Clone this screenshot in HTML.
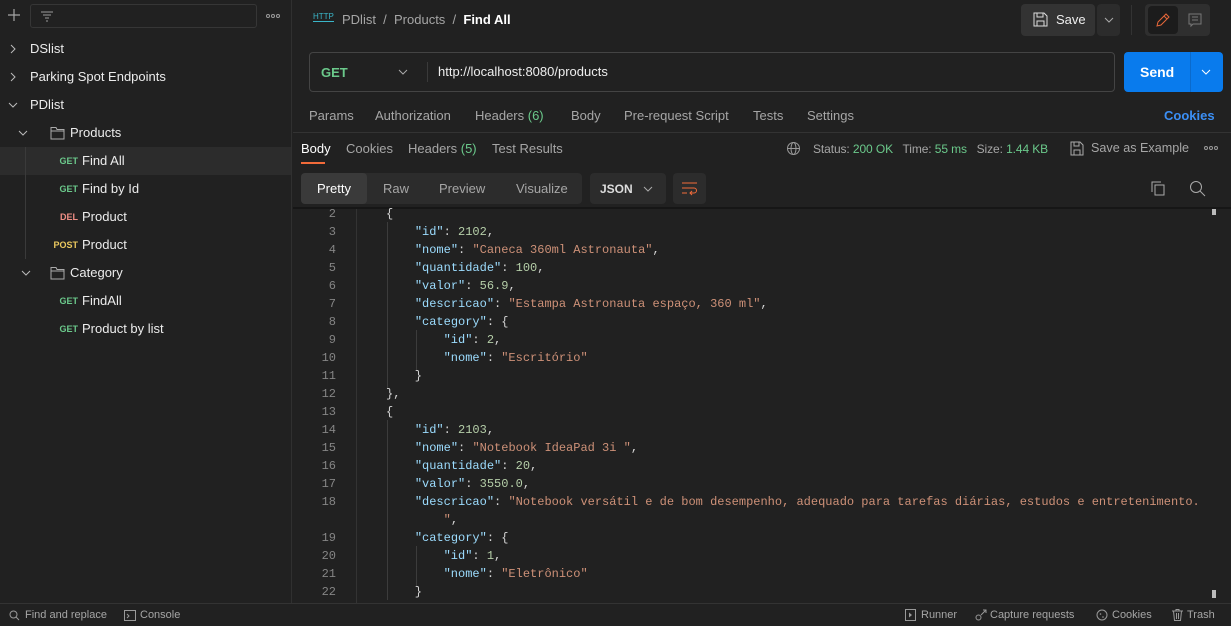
<!DOCTYPE html>
<html><head><meta charset="utf-8"><style>
*{margin:0;padding:0;box-sizing:border-box}
body{width:1231px;height:626px;background:#212121;font-family:"Liberation Sans",sans-serif;color:#e6e6e6;position:relative;overflow:hidden;font-size:13px}
.a{position:absolute;white-space:nowrap}
.side{position:absolute;left:0;top:0;width:292px;height:603px;background:#212121;border-right:1px solid #303030}
.row{position:absolute;left:0;width:291px;height:28px;line-height:28px;font-size:13px;color:#ececec}
.m{font-size:9px;font-weight:bold;display:inline-block;text-align:right}
.g{color:#6bc98b}.d{color:#f08e85}.p{color:#ecc95f}
.code{font-family:"Liberation Mono",monospace;font-size:12px;line-height:18px}
.k{color:#9cdcfe}.s{color:#ce9178}.n{color:#b5cea8}.w{color:#d4d4d4}
.ln{position:absolute;width:40px;text-align:right;left:296px;color:#858585;font-family:"Liberation Mono",monospace;font-size:12px}
.gray{color:#a6a6a6}
.dots{position:absolute;display:flex;gap:1px}
.dots i{display:block;width:4px;height:4px;border:1px solid #9a9a9a;border-radius:50%}
</style></head><body>
<div class="side">
  <svg class="a" style="left:8px;top:9px" width="12" height="12"><path d="M6 0v12M0 6h12" stroke="#a6a6a6" stroke-width="1.2"/></svg>
  <div class="a" style="left:30px;top:4px;width:227px;height:24px;border:1px solid #363636;border-radius:3px"></div>
  <svg class="a" style="left:40px;top:10px" width="14" height="12"><path d="M1 2h12M3 5h8M5 8h4M6 11h2" stroke="#9a9a9a" stroke-width="1"/></svg>
  <div class="dots" style="left:266px;top:14px"><i></i><i></i><i></i></div>
  <div class="row" style="top:35px"><svg class="a" style="left:10px;top:9px" width="6" height="10"><path d="M1 1l4 4-4 4" stroke="#bbb" fill="none"/></svg><span class="a" style="left:30px">DSlist</span></div>
  <div class="row" style="top:63px"><svg class="a" style="left:10px;top:9px" width="6" height="10"><path d="M1 1l4 4-4 4" stroke="#bbb" fill="none"/></svg><span class="a" style="left:30px">Parking Spot Endpoints</span></div>
  <div class="row" style="top:91px"><svg class="a" style="left:8px;top:11px" width="10" height="6"><path d="M1 1l4 4 4-4" stroke="#bbb" fill="none"/></svg><span class="a" style="left:30px">PDlist</span></div>
  <div class="row" style="top:119px"><svg class="a" style="left:18px;top:11px" width="10" height="6"><path d="M1 1l4 4 4-4" stroke="#bbb" fill="none"/></svg><svg class="a" style="left:50px;top:7px" width="15" height="14"><path d="M1 1.5h5l1 2h7v9.5H1zM1 5h13" stroke="#aaa" fill="none"/></svg><span class="a" style="left:70px">Products</span></div>
  <div class="row" style="top:147px;background:#2c2c2c"><span class="a m g" style="left:40px;width:38px">GET</span><span class="a" style="left:82px">Find All</span></div>
  <div class="row" style="top:175px"><span class="a m g" style="left:40px;width:38px">GET</span><span class="a" style="left:82px">Find by Id</span></div>
  <div class="row" style="top:203px"><span class="a m d" style="left:40px;width:38px">DEL</span><span class="a" style="left:82px">Product</span></div>
  <div class="row" style="top:231px"><span class="a m p" style="left:40px;width:38px">POST</span><span class="a" style="left:82px">Product</span></div>
  <div class="a" style="left:25px;top:147px;width:1px;height:112px;background:#3a3a3a"></div>
  <div class="row" style="top:259px"><svg class="a" style="left:21px;top:11px" width="10" height="6"><path d="M1 1l4 4 4-4" stroke="#bbb" fill="none"/></svg><svg class="a" style="left:50px;top:7px" width="15" height="14"><path d="M1 1.5h5l1 2h7v9.5H1zM1 5h13" stroke="#aaa" fill="none"/></svg><span class="a" style="left:70px">Category</span></div>
  <div class="row" style="top:287px"><span class="a m g" style="left:40px;width:38px">GET</span><span class="a" style="left:82px">FindAll</span></div>
  <div class="row" style="top:315px"><span class="a m g" style="left:40px;width:38px">GET</span><span class="a" style="left:82px">Product by list</span></div>
</div>

<!-- header -->
<div class="a" style="left:313px;top:12px;font-size:8px;color:#3ab6c9;border-bottom:1px solid #3ab6c9">HTTP</div>
<div class="a" style="left:342px;top:12px;font-size:13px;color:#a6a6a6">PDlist &nbsp;/&nbsp; Products &nbsp;/&nbsp; <b style="color:#fff">Find All</b></div>
<div class="a" style="left:1021px;top:4px;width:74px;height:32px;background:#333;border-radius:4px"></div>
<svg class="a" style="left:1033px;top:12px" width="15" height="15"><path d="M1 1h10l3 3v10H1zM4 1v4h6V1M4 14V9h7v5" stroke="#ddd" fill="none"/></svg>
<div class="a" style="left:1056px;top:12px;font-size:13px;color:#eee">Save</div>
<div class="a" style="left:1097px;top:4px;width:23px;height:32px;background:#2c2c2c;border-radius:4px"></div>
<svg class="a" style="left:1104px;top:17px" width="10" height="6"><path d="M1 1l4 4 4-4" stroke="#aaa" fill="none"/></svg>
<div class="a" style="left:1131px;top:5px;width:1px;height:30px;background:#333"></div>
<div class="a" style="left:1145px;top:4px;width:65px;height:32px;background:#2f2f2f;border-radius:4px"></div>
<div class="a" style="left:1148px;top:6px;width:30px;height:28px;background:#1c1c1c;border-radius:4px"></div>
<svg class="a" style="left:1155px;top:12px" width="16" height="16"><path d="M2 14l1-4 8-8 3 3-8 8zM9 4l3 3" stroke="#e8683a" fill="none"/></svg>
<svg class="a" style="left:1187px;top:12px" width="16" height="16"><path d="M2 2h12v10H6l-2 2v-2H2zM5 5h6M5 8h6" stroke="#777" fill="none"/></svg>

<!-- URL bar -->
<div class="a" style="left:309px;top:52px;width:806px;height:40px;border:1px solid #444;border-radius:4px"></div>
<div class="a" style="left:321px;top:65px;font-size:13px;font-weight:bold;color:#6bc98b">GET</div>
<svg class="a" style="left:398px;top:69px" width="10" height="6"><path d="M1 1l4 4 4-4" stroke="#aaa" fill="none"/></svg>
<div class="a" style="left:427px;top:62px;width:1px;height:20px;background:#3a3a3a"></div>
<div class="a" style="left:438px;top:64px;font-size:13px;color:#eee">http://localhost:8080/products</div>
<div class="a" style="left:1124px;top:52px;width:99px;height:40px;background:#097bed;border-radius:4px"></div>
<div class="a" style="left:1190px;top:52px;width:1px;height:40px;background:#0a6acc"></div>
<div class="a" style="left:1140px;top:64px;font-size:14px;font-weight:bold;color:#fff">Send</div>
<svg class="a" style="left:1201px;top:69px" width="10" height="6"><path d="M1 1l4 4 4-4" stroke="#fff" fill="none"/></svg>

<!-- request tabs -->
<div class="a gray" style="left:309px;top:108px">Params</div>
<div class="a gray" style="left:375px;top:108px">Authorization</div>
<div class="a gray" style="left:475px;top:108px">Headers <span class="g">(6)</span></div>
<div class="a gray" style="left:571px;top:108px">Body</div>
<div class="a gray" style="left:624px;top:108px">Pre-request Script</div>
<div class="a gray" style="left:753px;top:108px">Tests</div>
<div class="a gray" style="left:807px;top:108px">Settings</div>
<div class="a" style="left:1164px;top:108px;color:#3b8ff5;font-weight:bold">Cookies</div>
<div class="a" style="left:293px;top:132px;width:938px;height:1px;background:#333"></div>

<!-- response tabs -->
<div class="a" style="left:301px;top:141px;color:#fff">Body</div>
<div class="a" style="left:301px;top:162px;width:24px;height:2px;background:#f26b3a"></div>
<div class="a gray" style="left:346px;top:141px">Cookies</div>
<div class="a gray" style="left:408px;top:141px">Headers <span class="g">(5)</span></div>
<div class="a gray" style="left:492px;top:141px">Test Results</div>
<svg class="a" style="left:786px;top:141px" width="15" height="15"><circle cx="7.5" cy="7.5" r="6" stroke="#999" fill="none"/><ellipse cx="7.5" cy="7.5" rx="2.5" ry="6" stroke="#999" fill="none"/><path d="M1.5 7.5h12" stroke="#999"/></svg>
<div class="a gray" style="left:813px;top:142px;font-size:12px;letter-spacing:-0.1px">Status: <span class="g">200 OK</span> &nbsp; Time: <span class="g">55 ms</span> &nbsp; Size: <span class="g">1.44 KB</span></div>
<svg class="a" style="left:1070px;top:141px" width="14" height="15"><path d="M1 1h9l3 3v10H1zM4 1v4h5V1M4 14V9h6v5" stroke="#aaa" fill="none"/></svg>
<div class="a gray" style="left:1091px;top:141px;font-size:12.6px">Save as Example</div>
<div class="dots" style="left:1204px;top:146px"><i></i><i></i><i></i></div>

<!-- toolbar -->
<div class="a" style="left:301px;top:173px;width:281px;height:31px;background:#2c2c2c;border-radius:4px"></div>
<div class="a" style="left:301px;top:173px;width:66px;height:31px;background:#3a3a3a;border-radius:4px"></div>
<div class="a" style="left:317px;top:181px;color:#fff">Pretty</div>
<div class="a gray" style="left:383px;top:181px">Raw</div>
<div class="a gray" style="left:439px;top:181px">Preview</div>
<div class="a gray" style="left:516px;top:181px">Visualize</div>
<div class="a" style="left:590px;top:173px;width:76px;height:31px;background:#2c2c2c;border-radius:4px"></div>
<div class="a" style="left:600px;top:182px;font-size:12px;font-weight:bold;color:#ddd">JSON</div>
<svg class="a" style="left:643px;top:186px" width="10" height="6"><path d="M1 1l4 4 4-4" stroke="#aaa" fill="none"/></svg>
<div class="a" style="left:673px;top:173px;width:33px;height:31px;background:#2c2c2c;border-radius:4px"></div>
<svg class="a" style="left:681px;top:181px" width="18" height="15"><path d="M1 2h15M1 7h12a2.5 2.5 0 010 5h-4M11 10l-2 2 2 2M1 12h5" stroke="#f26b3a" fill="none"/></svg>
<svg class="a" style="left:1150px;top:180px" width="16" height="17"><path d="M5 5h9v10H5zM2 12V2h9" stroke="#aaa" fill="none"/></svg>
<svg class="a" style="left:1189px;top:180px" width="17" height="17"><circle cx="7" cy="7" r="5.5" stroke="#aaa" fill="none"/><path d="M11 11l5 5" stroke="#aaa"/></svg>

<!-- code -->
<div class="a" style="left:293px;top:207px;width:938px;height:2px;background:#161616"></div>
<div class="a" style="left:1212px;top:209px;width:4px;height:6px;background:#bbb"></div>
<div class="a" style="left:1212px;top:590px;width:4px;height:8px;background:#bbb"></div>
<div class="a" style="left:356px;top:209px;width:1px;height:394px;background:#333"></div>
<div class="a" style="left:387px;top:222px;width:1px;height:166px;background:#3c3c3c"></div>
<div class="a" style="left:416px;top:330px;width:1px;height:40px;background:#3c3c3c"></div>
<div class="a" style="left:387px;top:420px;width:1px;height:180px;background:#3c3c3c"></div>
<div class="a" style="left:416px;top:546px;width:1px;height:40px;background:#3c3c3c"></div>

<div class="a code" style="left:0;top:205px">
<div class="ln" style="top:0">2</div><div class="ln" style="top:18px">3</div><div class="ln" style="top:36px">4</div><div class="ln" style="top:54px">5</div><div class="ln" style="top:72px">6</div><div class="ln" style="top:90px">7</div><div class="ln" style="top:108px">8</div><div class="ln" style="top:126px">9</div><div class="ln" style="top:144px">10</div><div class="ln" style="top:162px">11</div><div class="ln" style="top:180px">12</div><div class="ln" style="top:198px">13</div><div class="ln" style="top:216px">14</div><div class="ln" style="top:234px">15</div><div class="ln" style="top:252px">16</div><div class="ln" style="top:270px">17</div><div class="ln" style="top:288px">18</div><div class="ln" style="top:324px">19</div><div class="ln" style="top:342px">20</div><div class="ln" style="top:360px">21</div><div class="ln" style="top:378px">22</div>
</div>
<div class="a code w" style="left:386px;top:205px;white-space:pre">{
    <span class="k">"id"</span>: <span class="n">2102</span>,
    <span class="k">"nome"</span>: <span class="s">"Caneca 360ml Astronauta"</span>,
    <span class="k">"quantidade"</span>: <span class="n">100</span>,
    <span class="k">"valor"</span>: <span class="n">56.9</span>,
    <span class="k">"descricao"</span>: <span class="s">"Estampa Astronauta espaço, 360 ml"</span>,
    <span class="k">"category"</span>: {
        <span class="k">"id"</span>: <span class="n">2</span>,
        <span class="k">"nome"</span>: <span class="s">"Escritório"</span>
    }
},
{
    <span class="k">"id"</span>: <span class="n">2103</span>,
    <span class="k">"nome"</span>: <span class="s">"Notebook IdeaPad 3i "</span>,
    <span class="k">"quantidade"</span>: <span class="n">20</span>,
    <span class="k">"valor"</span>: <span class="n">3550.0</span>,
    <span class="k">"descricao"</span>: <span class="s">"Notebook versátil e de bom desempenho, adequado para tarefas diárias, estudos e entretenimento.</span>
        <span class="s">"</span>,
    <span class="k">"category"</span>: {
        <span class="k">"id"</span>: <span class="n">1</span>,
        <span class="k">"nome"</span>: <span class="s">"Eletrônico"</span>
    }</div>

<!-- footer -->
<div class="a" style="left:0;top:603px;width:1231px;height:23px;background:#212121;border-top:1px solid #333"></div>
<svg class="a" style="left:9px;top:610px" width="11" height="11"><circle cx="4.5" cy="4.5" r="3.5" stroke="#999" fill="none"/><path d="M7 7l3 3" stroke="#999"/></svg>
<div class="a gray" style="left:25px;top:609px;font-size:11px">Find and replace</div>
<svg class="a" style="left:124px;top:610px" width="12" height="11"><rect x="0.5" y="0.5" width="11" height="10" stroke="#999" fill="none"/><path d="M3 4l2 2-2 2" stroke="#999" fill="none"/></svg>
<div class="a gray" style="left:140px;top:609px;font-size:11px">Console</div>
<svg class="a" style="left:905px;top:609px" width="11" height="12"><rect x="0.5" y="0.5" width="10" height="11" stroke="#999" fill="none"/><path d="M4 3.5l3 2.5-3 2.5z" fill="#999"/></svg>
<div class="a gray" style="left:921px;top:609px;font-size:11px">Runner</div>
<svg class="a" style="left:975px;top:609px" width="12" height="12"><circle cx="3.5" cy="8.5" r="2.5" stroke="#999" fill="none"/><path d="M6 6l5-5M8 1h3v3" stroke="#999" fill="none"/></svg>
<div class="a gray" style="left:990px;top:609px;font-size:11px">Capture requests</div>
<svg class="a" style="left:1096px;top:608px" width="12" height="13"><circle cx="6" cy="7" r="5" stroke="#999" fill="none"/><circle cx="4.5" cy="6" r="0.8" fill="#999"/><circle cx="7" cy="9" r="0.8" fill="#999"/></svg>
<div class="a gray" style="left:1112px;top:609px;font-size:11px">Cookies</div>
<svg class="a" style="left:1172px;top:609px" width="11" height="12"><path d="M0 2h11M4 2V0.5h3V2M1.5 2l1 9.5h6l1-9.5M4.5 4v6M6.5 4v6" stroke="#999" fill="none"/></svg>
<div class="a gray" style="left:1187px;top:609px;font-size:11px">Trash</div>
</body></html>
